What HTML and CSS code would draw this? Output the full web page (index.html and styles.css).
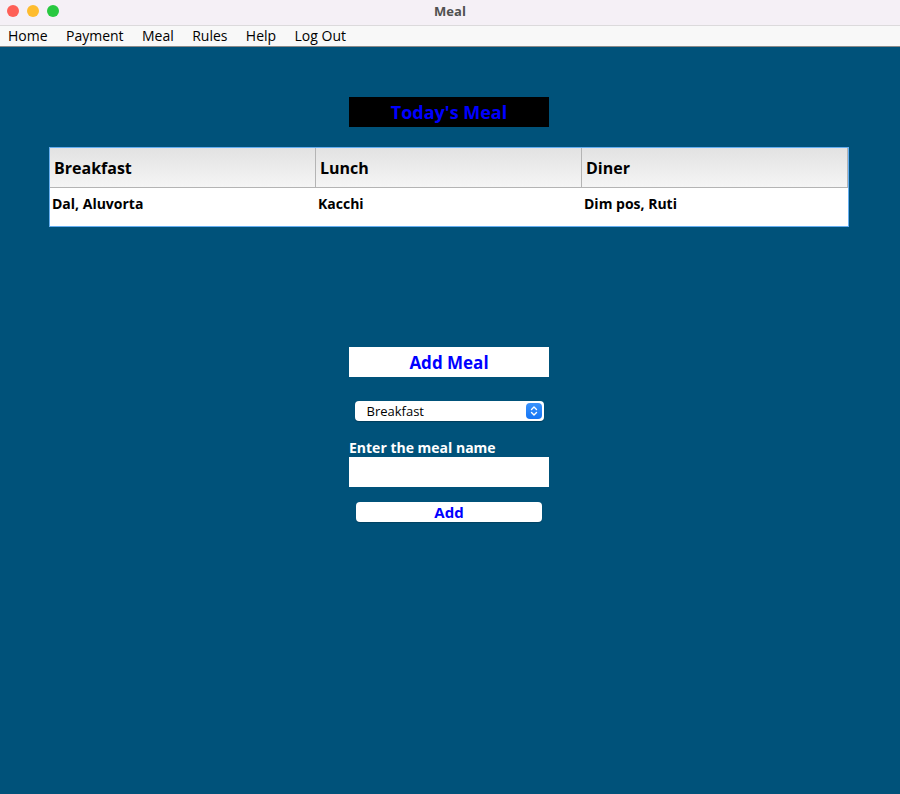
FILE: index.html
```html
<!DOCTYPE html>
<html>
<head>
<meta charset="utf-8">
<title>Meal</title>
<link rel="stylesheet" href="styles.css">
</head>
<body>
<div class="window">
  <div class="titlebar">
    <div class="lights">
      <span class="light red"></span>
      <span class="light yellow"></span>
      <span class="light green"></span>
    </div>
    <div class="title">Meal</div>
  </div>
  <div class="menubar">
    <span class="menu-item">Home</span>
    <span class="menu-item">Payment</span>
    <span class="menu-item">Meal</span>
    <span class="menu-item">Rules</span>
    <span class="menu-item">Help</span>
    <span class="menu-item">Log Out</span>
  </div>
  <div class="content">
    <div class="heading">Today's Meal</div>
    <div class="meal-table">
      <div class="th">Breakfast</div>
      <div class="th">Lunch</div>
      <div class="th">Diner</div>
      <div class="td">Dal, Aluvorta</div>
      <div class="td">Kacchi</div>
      <div class="td">Dim pos, Ruti</div>
    </div>
    <div class="add-meal">Add Meal</div>
    <div class="combo">
      <span class="combo-text">Breakfast</span>
      <span class="combo-arrow">
        <svg width="10" height="12" viewBox="0 0 10 12"><path d="M2.5 4.5 L5 2 L7.5 4.5 M2.5 7.5 L5 10 L7.5 7.5" fill="none" stroke="#fff" stroke-width="1.4" stroke-linecap="round" stroke-linejoin="round"/></svg>
      </span>
    </div>
    <div class="field-label">Enter the meal name</div>
    <div class="text-field"></div>
    <div class="add-btn">Add</div>
  </div>
</div>
</body>
</html>
```
FILE: styles.css
```css
html, body {
  margin: 0;
  padding: 0;
  height: 100%;
}
body {
  font-family: "Open Sans", "DejaVu Sans", sans-serif;
  background: #00527a;
}
.window {
  display: flex;
  flex-direction: column;
  height: 794px;
  width: 900px;
}
.titlebar {
  height: 25px;
  background: #f5f0f6;
  border-bottom: 1px solid #dcdadc;
  display: flex;
  align-items: center;
  justify-content: center;
  position: relative;
}
.lights {
  position: absolute;
  left: 7px;
  top: 5px;
  display: flex;
  gap: 8px;
}
.light {
  width: 12px;
  height: 12px;
  border-radius: 50%;
  display: block;
}
.red { background: #fe5f57; }
.yellow { background: #febc2e; }
.green { background: #28c840; }
.title {
  font-size: 13px;
  font-weight: bold;
  color: #505050;
  font-family: "Open Sans", sans-serif;
  margin-top: -3px;
}
.menubar {
  height: 20px;
  background: #f8f8f8;
  border-bottom: 1px solid #8a8a8a;
  display: flex;
  align-items: center;
  padding-left: 8px;
  gap: 18.4px;
}
.menu-item {
  font-size: 14px;
  color: #000;
  line-height: 20px;
}
.content {
  flex: 1;
  background: #00527a;
  display: flex;
  flex-direction: column;
  align-items: center;
  padding-right: 2px;
}
.heading {
  margin-top: 50px;
  width: 200px;
  height: 30px;
  background: #000;
  color: #0000ff;
  font-weight: bold;
  font-size: 18px;
  display: flex;
  align-items: center;
  justify-content: center;
}
.meal-table {
  margin-top: 20px;
  width: 798px;
  border: 1px solid #66aef0;
  background: #fff;
  display: grid;
  grid-template-columns: 266px 266px 266px;
  grid-template-rows: 40px 38px;
}
.th {
  background: linear-gradient(#e2e2e2, #f5f5f5);
  border-right: 1px solid #b4b4b4;
  border-bottom: 1px solid #b4b4b4;
  font-weight: bold;
  font-size: 16px;
  color: #000;
  padding-left: 4px;
  display: flex;
  align-items: center;
}
.td {
  font-weight: bold;
  font-size: 14px;
  color: #000;
  padding-left: 2px;
  display: flex;
  align-items: center;
  padding-bottom: 7px;
}
.add-meal {
  margin-top: 120px;
  width: 200px;
  height: 30px;
  background: #fff;
  color: #0000ff;
  font-weight: bold;
  font-size: 17px;
  display: flex;
  align-items: center;
  justify-content: center;
}
.combo {
  margin-top: 24px;
  width: 189px;
  height: 20px;
  background: #fff;
  border-radius: 4px;
  box-shadow: 0 1px 1px rgba(0,0,0,0.25);
  display: flex;
  align-items: center;
  justify-content: space-between;
  box-sizing: border-box;
  padding: 0 2px 0 12px;
}
.combo-text {
  font-size: 13px;
  color: #000;
}
.combo-arrow {
  width: 16px;
  height: 16px;
  border-radius: 4px;
  background: linear-gradient(#3a93fc, #1474f4);
  display: flex;
  align-items: center;
  justify-content: center;
}
.field-label {
  margin-top: 18px;
  width: 200px;
  color: #fff;
  font-weight: bold;
  font-size: 14px;
  line-height: 18px;
}
.text-field {
  width: 200px;
  height: 30px;
  background: #fff;
}
.add-btn {
  margin-top: 15px;
  width: 186px;
  height: 20px;
  background: #fff;
  border-radius: 4px;
  color: #0000ff;
  font-weight: bold;
  font-size: 15px;
  line-height: 18px;
  display: flex;
  align-items: center;
  justify-content: center;
  box-shadow: 0 1px 1px rgba(0,0,0,0.2);
}
```
